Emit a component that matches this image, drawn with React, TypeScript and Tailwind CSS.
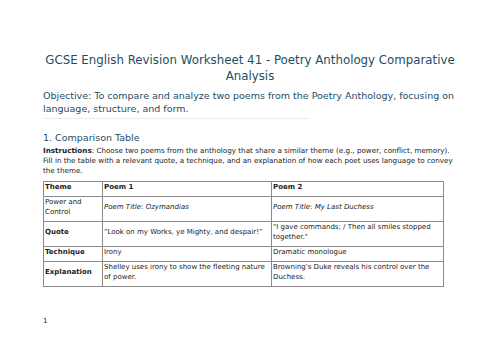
import React from "react";

const rows = [
  { theme: "Power and Control", p1: <><i>Poem Title</i>: <i>Ozymandias</i></>, p2: <><i>Poem Title</i>: <i>My Last Duchess</i></>, bold: false },
  { theme: "Quote", p1: "“Look on my Works, ye Mighty, and despair!”", p2: "\"I gave commands; / Then all smiles stopped together.\"", bold: true },
  { theme: "Technique", p1: "Irony", p2: "Dramatic monologue", bold: true },
  { theme: "Explanation", p1: "Shelley uses irony to show the fleeting nature of power.", p2: "Browning's Duke reveals his control over the Duchess.", bold: true },
];

function Cell({ children, className = "" }: any) {
  return (
    <td className={`border border-[#8a8a8a] pl-px pr-1 pb-[4px] align-middle leading-[10px] ${className}`}>
      {children}
    </td>
  );
}

export default function App() {
  return (
    <div className="h-[353px] w-[500px] bg-white px-[43px] pt-[52px] text-[#222] font-['DejaVu_Sans',sans-serif]">
      <h1 className="text-center text-[11.8px] leading-[16px] text-[#1f4d63]">
        GCSE English Revision Worksheet 41 - Poetry Anthology Comparative Analysis
      </h1>
      <p className="mt-[5px] text-[9.5px] leading-[13px] text-[#1f4d63]">
        Objective: To compare and analyze two poems from the Poetry Anthology, focusing on language, structure, and form.
      </p>
      <div className="mt-[3px] h-px w-[267px] bg-[#ececec]" />

      <h2 className="mt-[12px] text-[9.5px] leading-[14px] text-[#1f4d63]">1. Comparison Table</h2>
      <p className="mt-[1px] text-[7.2px] leading-[10px]">
        <b>Instructions</b>: Choose two poems from the anthology that share a similar theme (e.g., power, conflict, memory). Fill in the table with a relevant quote, a technique, and an explanation of how each poet uses language to convey the theme.
      </p>

      <table className="mt-[5px] w-[400px] table-fixed border-collapse text-[7px] text-[#222]">
        <colgroup>
          <col className="w-[59px]" />
          <col className="w-[169px]" />
          <col className="w-[172px]" />
        </colgroup>
        <tbody>
          <tr>
            <Cell className="font-bold">Theme</Cell>
            <Cell className="font-bold">Poem 1</Cell>
            <Cell className="font-bold">Poem 2</Cell>
          </tr>
          {rows.map((r, i) => (
            <tr key={i}>
              <Cell className={r.bold ? "font-bold" : ""}>{r.theme}</Cell>
              <Cell>{r.p1}</Cell>
              <Cell>{r.p2}</Cell>
            </tr>
          ))}
        </tbody>
      </table>

      <p className="mt-[29px] text-[7px] leading-[10px]">1</p>
    </div>
  );
}
